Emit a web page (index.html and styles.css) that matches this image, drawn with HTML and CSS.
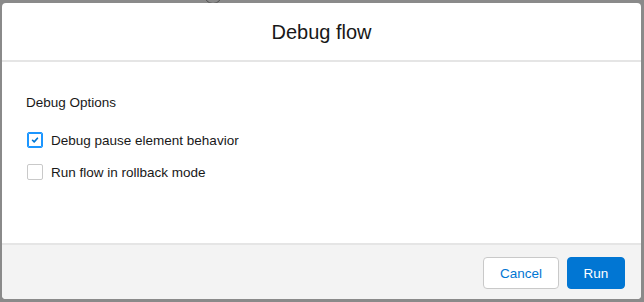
FILE: index.html
```html
<!DOCTYPE html>
<html>
<head>
<meta charset="utf-8">
<link rel="stylesheet" href="styles.css">
</head>
<body>
<div class="backdrop">
  <div class="ghost"></div>
  <div class="modal">
    <header class="modal-header">
      <h1 class="modal-title">Debug flow</h1>
    </header>
    <section class="modal-body">
      <div class="legend">Debug Options</div>
      <label class="option">
        <span class="box checked">
          <svg viewBox="0 0 16 16" width="16" height="16"><path d="M5.2 8.3 L7.1 10.1 L10.8 6" fill="none" stroke="#0176d3" stroke-width="1.9" stroke-linecap="round" stroke-linejoin="round"/></svg>
        </span>
        <span class="label">Debug pause element behavior</span>
      </label>
      <label class="option">
        <span class="box"></span>
        <span class="label">Run flow in rollback mode</span>
      </label>
    </section>
    <footer class="modal-footer">
      <button class="btn btn-neutral">Cancel</button>
      <button class="btn btn-brand">Run</button>
    </footer>
  </div>
</div>
</body>
</html>
```
FILE: styles.css
```css
html, body {
  margin: 0;
  padding: 0;
}
body {
  background: #8a8a8a;
  font-family: "Liberation Sans", Arial, sans-serif;
  color: #181818;
  width: 644px;
  height: 302px;
  overflow: hidden;
}
.backdrop {
  position: relative;
  padding: 3px 3px 3px 2px;
}
.ghost {
  position: absolute;
  left: 204px;
  top: -14px;
  width: 16px;
  height: 16px;
  border: 1.5px solid #555;
  border-radius: 50%;
}
.modal {
  position: relative;
  width: 639px;
  height: 296px;
  background: #fff;
  border-radius: 4px;
  display: flex;
  flex-direction: column;
  overflow: hidden;
}
.modal-header {
  height: 57px;
  border-bottom: 2px solid #e5e5e5;
  display: flex;
  align-items: center;
  justify-content: center;
}
.modal-title {
  margin: 0;
  font-weight: 400;
  font-size: 20px;
  line-height: 24px;
  padding-top: 1px;
}
.modal-body {
  flex: 1;
  padding: 32px 24px 0 24px;
}
.legend {
  font-size: 13.5px;
  line-height: 18px;
  margin-bottom: 12px;
}
.option {
  display: flex;
  align-items: center;
  height: 32px;
  font-size: 13.5px;
}
.box {
  width: 16px;
  height: 16px;
  box-sizing: border-box;
  border: 1px solid #c9c9c9;
  border-radius: 2px;
  margin-right: 8px;
  margin-left: 1px;
  display: flex;
  align-items: center;
  justify-content: center;
  background: #fff;
}
.box.checked {
  border-color: #1b96ff;
  box-shadow: 0 0 0 1px #1b96ff inset;
}
.box svg {
  display: block;
}
.modal-footer {
  height: 56px;
  box-sizing: border-box;
  border-top: 2px solid #e5e5e5;
  background: #f3f3f3;
  display: flex;
  justify-content: flex-end;
  align-items: flex-start;
  padding: 12px 16px 0 0;
  gap: 8px;
}
.btn {
  height: 32px;
  box-sizing: border-box;
  border-radius: 4px;
  font-family: "Liberation Sans", Arial, sans-serif;
  font-size: 13.5px;
  padding: 0 12px;
  cursor: pointer;
}
.btn-neutral {
  width: 76px;
  background: #fff;
  border: 1px solid #c9c9c9;
  color: #0176d3;
}
.btn-brand {
  width: 58px;
  background: #0176d3;
  border: 1px solid #0176d3;
  color: #fff;
}
```
